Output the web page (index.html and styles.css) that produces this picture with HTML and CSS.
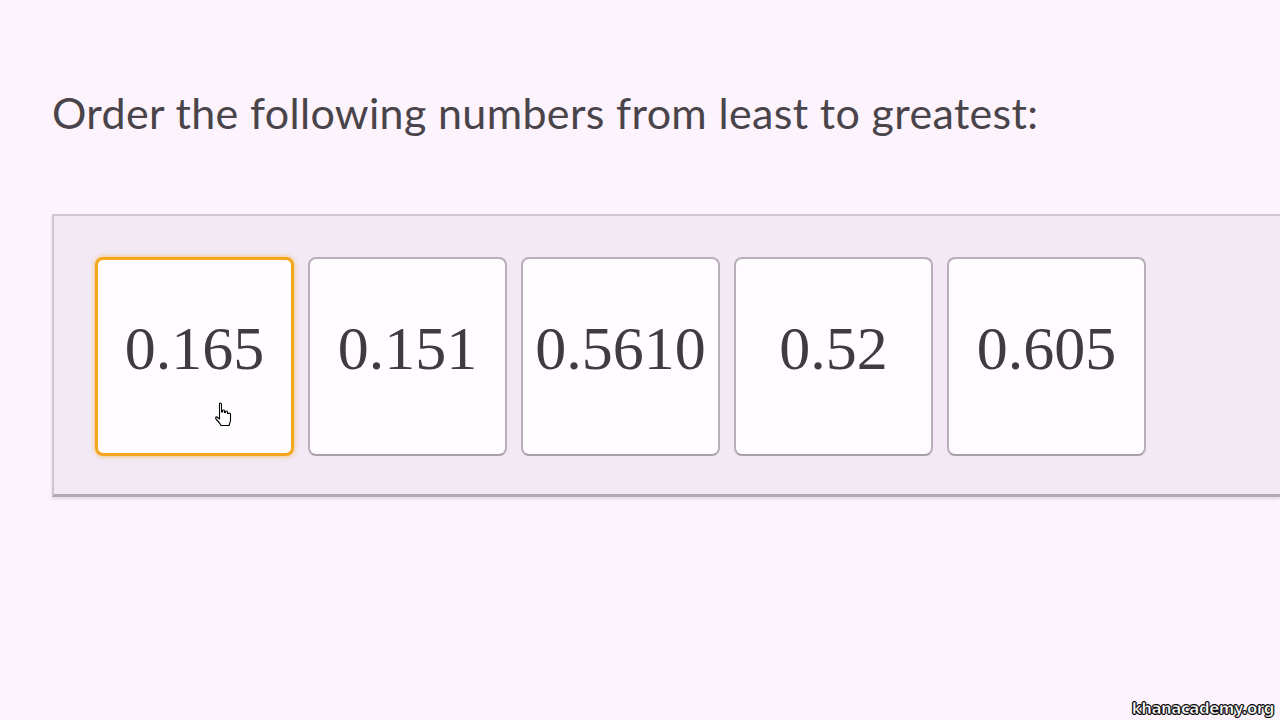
FILE: index.html
```html
<!DOCTYPE html>
<html lang="en">
<head>
  <meta charset="UTF-8">
  <meta name="viewport" content="width=device-width, initial-scale=1">
  <title>Ordering decimals</title>
  <link rel="stylesheet" href="styles.css">
</head>
<body>

<div class="page">
  <h1 class="question">Order the following numbers from least to greatest:</h1>

  <div class="sortable">
    <div class="card active">
      <span class="num">0.165</span>
      <svg class="cursor" width="18" height="26" viewBox="0 0 18 26">
        <path d="M5.5 1.5 C6.5 0.8 7.5 1.2 7.5 2.5 L7.5 10 L8.5 10 L8.5 8.5 C9 7.8 10.3 7.8 10.5 8.8 L10.5 10.5 L11.5 10.5 L11.5 9.5 C12 8.8 13.2 8.8 13.5 9.8 L13.5 11.5 L14.5 11.5 C15 10.8 16.3 11 16.5 12 L16.5 18 C16.5 20 15.5 21.5 15 23.5 L7 23.5 C6 21.5 4.5 19.5 2 17 C1.2 16 1.8 14.5 3 15 L5.5 17 Z" fill="#fff" stroke="#000" stroke-width="1.1" stroke-linejoin="round"/>
      </svg>
    </div>
    <div class="card"><span class="num">0.151</span></div>
    <div class="card"><span class="num">0.5610</span></div>
    <div class="card"><span class="num">0.52</span></div>
    <div class="card"><span class="num">0.605</span></div>
  </div>
</div>

<div class="watermark">khanacademy.org</div>

</body>
</html>
```

FILE: styles.css
```css
html, body {
  margin: 0;
  padding: 0;
}
body {
  background-color: #fdf3fd;
  font-family: Lato, "Open Sans", sans-serif;
  width: 1280px;
  height: 720px;
  overflow: hidden;
  position: relative;
}
.page {
  padding: 90px 0 0 52px;
}
.question {
  margin: 0 0 78px 0;
  font-size: 43px;
  font-weight: 400;
  color: #49444a;
  line-height: 46px;
  letter-spacing: 0.35px;
}
.sortable {
  display: flex;
  gap: 14px;
  box-sizing: border-box;
  width: 1228px;
  background-color: #f2e9f5;
  border-top: 2px solid #d0c5d2;
  border-left: 2px solid #d0c5d2;
  border-bottom: 3px solid #b2a9b3;
  box-shadow: 0 2px 3px rgba(150, 140, 150, 0.25);
  padding: 41px 0 38px 41px;
}
.card {
  position: relative;
  flex: none;
  width: 199px;
  height: 199px;
  background-color: #fffcff;
  border: 2px solid #b8aeb9;
  border-bottom-color: #a89fa9;
  border-radius: 8px;
  display: flex;
  justify-content: center;
  padding-top: 54px;
  box-sizing: border-box;
}
.card.active {
  border: 3px solid #f6a61c;
  box-shadow: 0 0 5px rgba(246, 166, 28, 0.7);
  padding-top: 53px;
}
.num {
  font-family: "Liberation Serif", "DejaVu Serif", serif;
  font-size: 62px;
  line-height: 70px;
  color: #3f3b40;
}
.cursor {
  position: absolute;
  left: 116px;
  top: 142px;
}
.watermark {
  position: absolute;
  right: 6px;
  bottom: 2px;
  font-family: "DejaVu Sans", sans-serif;
  font-size: 15px;
  font-weight: bold;
  color: #fff;
  -webkit-text-stroke: 0.5px #000;
  text-shadow: -1px 0 #000, 1px 0 #000, 0 -1px #000, 0 1px #000;
  letter-spacing: -0.5px;
}
```
